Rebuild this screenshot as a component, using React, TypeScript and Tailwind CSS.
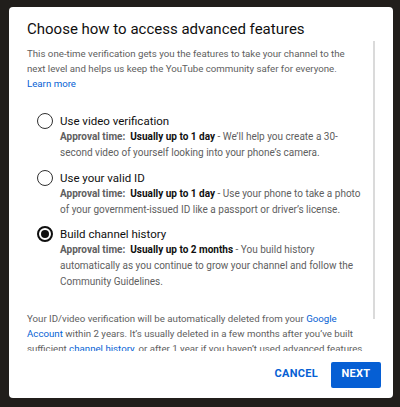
import React, { useState } from 'react';

const options = [
  {
    id: 'video',
    label: 'Use video verification',
    time: 'Usually up to 1 day',
    desc: " - We’ll help you create a 30-second video of yourself looking into your phone’s camera.",
  },
  {
    id: 'id',
    label: 'Use your valid ID',
    time: 'Usually up to 1 day',
    desc: ' - Use your phone to take a photo of your government-issued ID like a passport or driver’s license.',
  },
  {
    id: 'history',
    label: 'Build channel history',
    time: 'Usually up to 2 months',
    desc: ' - You build history automatically as you continue to grow your channel and follow the Community Guidelines.',
  },
];

const Radio: React.FC<{ checked: boolean }> = ({ checked }) => (
  <span
    className={
      checked
        ? 'w-[16px] h-[16px] rounded-full border-[2px] border-[#0f0f0f] flex items-center justify-center shrink-0'
        : 'w-[16px] h-[16px] rounded-full border-[1.5px] border-[#303030] flex items-center justify-center shrink-0'
    }
  >
    {checked && <span className="w-[8px] h-[8px] rounded-full bg-[#0f0f0f]" />}
  </span>
);

export default function App() {
  const [selected, setSelected] = useState('history');

  return (
    <div className="w-[400px] h-[407px] bg-[#211e1b] pt-[7px] pl-[9px] pr-[7px] pb-[9px] font-['Roboto',_'Liberation_Sans',_sans-serif]">
      <div className="w-full h-full bg-white rounded-[4px] flex flex-col">
        <h2 className="pl-[18px] pt-[12px] text-[15px] leading-[20px] text-[#0f0f0f] font-normal">
          Choose how to access advanced features
        </h2>

        <div className="flex h-[312px] overflow-hidden">
          <div className="flex-1 pl-[18px] pr-[8px] pt-[7px] text-[9.7px] leading-[15px] text-[#606060]">
            <p>
              This one-time verification gets you the features to take your channel to the next level and helps us keep the YouTube community safer for everyone.
            </p>
            <a className="text-[#065fd4] block">Learn more</a>

            <div className="mt-[22px] flex flex-col gap-[8.5px] pl-[10px]">
              {options.map((o) => (
                <label key={o.id} className="flex gap-[7px] cursor-pointer" onClick={() => setSelected(o.id)}>
                  <Radio checked={selected === o.id} />
                  <span className="flex flex-col pr-[2px]">
                    <span className="text-[11.5px] leading-[16px] text-[#0f0f0f]">{o.label}</span>
                    <span className="text-[10px] leading-[16px] text-[#606060]">
                      <b className="font-bold">Approval time:&nbsp; </b>
                      <b className="font-bold text-[#0f0f0f]">{o.time}</b>
                      {o.desc}
                    </span>
                  </span>
                </label>
              ))}
            </div>

            <p className="mt-[21px]">
              Your ID/video verification will be automatically deleted from your <a className="text-[#065fd4]">Google Account</a> within 2 years. It’s usually deleted in a few months after you’ve built sufficient <a className="text-[#065fd4]">channel history</a>, or after 1 year if you haven’t used advanced features.
            </p>
          </div>
          <div className="w-[20px] shrink-0 pt-[2px]">
            <div className="w-[2px] h-[278px] bg-[#dadada]" />
          </div>
        </div>

        <div className="flex-1 flex items-center justify-end gap-[13px] pr-[12px]">
          <button className="h-[26px] text-[11px] font-bold text-[#065fd4] tracking-[0.3px]">CANCEL</button>
          <button className="w-[50px] h-[26px] rounded-[2px] bg-[#065fd4] text-white text-[11px] font-bold tracking-[0.3px]">NEXT</button>
        </div>
      </div>
    </div>
  );
}
